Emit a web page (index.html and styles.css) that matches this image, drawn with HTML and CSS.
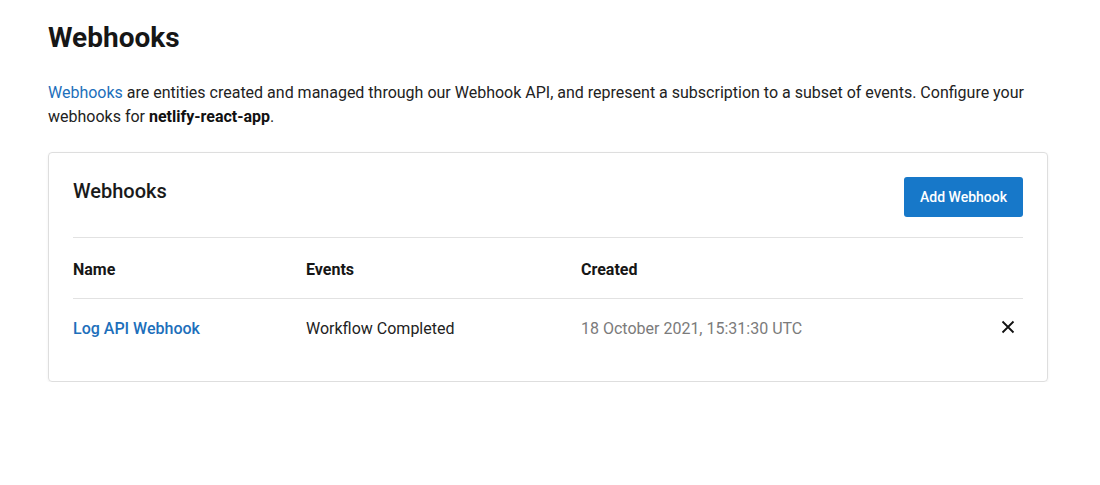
FILE: index.html
```html
<!DOCTYPE html>
<html lang="en">

<head>
  <meta charset="UTF-8">
  <meta name="viewport" content="width=device-width, initial-scale=1.0">
  <title>Webhooks</title>
  <link rel="stylesheet" href="styles.css">
</head>

<body>
  <div class="page">
    <h1 class="page-title">Webhooks</h1>
    <p class="intro">
      <a href="#" class="link">Webhooks</a> are entities created and managed through our Webhook API, and represent a subscription to a subset of events. Configure your webhooks for <strong>netlify-react-app</strong>.
    </p>

    <div class="card">
      <div class="card-header">
        <h2 class="card-title">Webhooks</h2>
        <button class="btn-primary">Add Webhook</button>
      </div>

      <table class="hooks">
        <thead>
          <tr>
            <th class="col-name">Name</th>
            <th class="col-events">Events</th>
            <th class="col-created">Created</th>
            <th class="col-action"></th>
          </tr>
        </thead>
        <tbody>
          <tr>
            <td><a href="#" class="link hook-name">Log API Webhook</a></td>
            <td>Workflow Completed</td>
            <td class="muted">18 October 2021, 15:31:30 UTC</td>
            <td class="col-action">
              <button class="btn-remove" aria-label="Remove">
                <svg width="14" height="14" viewBox="0 0 14 14">
                  <path d="M1.5 1.5 L12.5 12.5 M12.5 1.5 L1.5 12.5" stroke="#111" stroke-width="1.8" fill="none" />
                </svg>
              </button>
            </td>
          </tr>
        </tbody>
      </table>
    </div>
  </div>
</body>

</html>
```

FILE: styles.css
```css
* {
  box-sizing: border-box;
}

body {
  margin: 0;
  background: #fff;
  color: #1a1a1a;
  font-family: Roboto, "Liberation Sans", sans-serif;
  font-size: 16px;
}

.page {
  width: 1000px;
  padding: 20px 0 0 48px;
  box-sizing: content-box;
}

.page-title {
  margin: 0 0 24px;
  font-size: 28px;
  line-height: 36px;
  font-weight: 700;
  color: #161616;
}

.intro {
  margin: 0 0 23px;
  padding-top: 1px;
  line-height: 24px;
  color: #222;
}

.intro strong {
  font-weight: 700;
  color: #111;
}

.link {
  color: #1d6fbb;
  text-decoration: none;
}

.card {
  border: 1px solid #dedede;
  border-radius: 4px;
  box-shadow: 0 1px 3px rgba(0, 0, 0, 0.06);
  padding: 24px 24px 23px;
}

.card-header {
  display: flex;
  justify-content: space-between;
  align-items: flex-start;
  padding-bottom: 20px;
  border-bottom: 1px solid #e2e2e2;
}

.card-title {
  margin: 0;
  font-size: 20px;
  line-height: 28px;
  font-weight: 500;
  color: #1a1a1a;
}

.btn-primary {
  height: 40px;
  padding: 0 16px;
  border: 0;
  border-radius: 3px;
  background: #1778c9;
  color: #fff;
  font-family: inherit;
  font-size: 14px;
  font-weight: 500;
  cursor: pointer;
}

.hooks {
  width: 100%;
  border-collapse: collapse;
}

.hooks th,
.hooks td {
  text-align: left;
  padding: 0;
  vertical-align: middle;
}

.hooks th {
  height: 60px;
  font-weight: 700;
  font-size: 16px;
  color: #161616;
  border-bottom: 1px solid #e2e2e2;
  padding-top: 3px;
}

.hooks td {
  height: 60px;
  font-size: 16px;
  color: #222;
}

.hooks td.muted {
  color: #7b7b7b;
}

.col-name {
  width: 233px;
}

.col-events {
  width: 275px;
}

.col-action {
  width: 40px;
}

.hooks td.col-action {
  text-align: right;
}

.hook-name {
  font-weight: 500;
}

.btn-remove {
  border: 0;
  background: none;
  padding: 0;
  margin-right: 8px;
  cursor: pointer;
  display: inline-flex;
}
```
